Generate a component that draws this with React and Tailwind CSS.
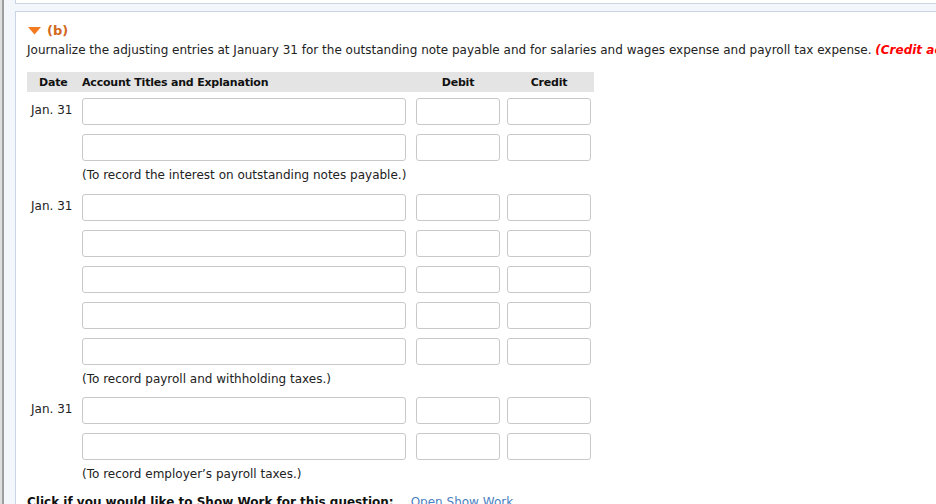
import React from "react";

const font = { fontFamily: '"DejaVu Sans", Verdana, sans-serif' };

function Inp({ w }) {
  return <div className={`${w} h-[27px] shrink-0 rounded-[3px] border border-[#c9c9c9] bg-white`} />;
}

function Row({ date }) {
  return (
    <div className="flex h-[27px] shrink-0 items-start">
      <div className="w-[55px] shrink-0 pl-[4px] pt-[5px] text-[12px] leading-[15px] text-[#222]">{date}</div>
      <Inp w="w-[324px]" />
      <div className="w-[10px] shrink-0" />
      <Inp w="w-[84px]" />
      <div className="w-[7px] shrink-0" />
      <Inp w="w-[84px]" />
    </div>
  );
}

function Group({ n, caption, mt }) {
  const rows = [];
  for (let i = 0; i < n; i++) rows.push(<Row key={i} date={i === 0 ? "Jan. 31" : ""} />);
  return (
    <div className={`${mt} flex shrink-0 flex-col`}>
      <div className="flex flex-col gap-[9px]">{rows}</div>
      <div className="mt-[7px] pl-[55px] text-[12px] leading-[15px] text-[#222]">{caption}</div>
    </div>
  );
}

export default function App() {
  return (
    <div className="flex h-[504px] w-[936px] overflow-hidden bg-[#f3f6fa]" style={font}>
      <div className="w-[2px] shrink-0 bg-[#dedede]" />
      <div className="w-[2px] shrink-0 bg-[#9d9d9d]" />
      <div className="flex min-w-0 flex-1 flex-col overflow-hidden pl-[11px]">
        <div className="h-[4px] shrink-0 border-b border-l border-[#c9d5e2] bg-white" />
        <div className="mt-[7px] flex min-h-0 flex-1 flex-col overflow-hidden border-l border-t border-[#c9d5e2] bg-white pl-[11px] pt-[12px]">
          <div className="flex h-[14px] shrink-0 items-center">
            <svg width="13" height="8" viewBox="0 0 13 8" className="ml-[1px] shrink-0">
              <polygon points="0,0 13,0 6.5,7.5" fill="#f47a20" />
            </svg>
            <span className="ml-[6px] text-[13px] font-bold leading-[14px] text-[#d2691e]">(b)</span>
          </div>
          <div className="mt-[5px] shrink-0 whitespace-nowrap text-[12px] leading-[15px] text-[#222]">
            Journalize the adjusting entries at January 31 for the outstanding note payable and for salaries and wages expense and payroll tax expense.{" "}
            <span className="font-bold italic text-[#ff0000]">(Credit account titles are automatically indented when amount is entered.)</span>
          </div>
          <div className="mt-[14px] flex h-[20px] w-[567px] shrink-0 items-center bg-[#e4e4e4] text-[11px] font-bold leading-[13px] tracking-[-0.2px] text-[#111]">
            <div className="w-[55px] shrink-0 pl-[12px]">Date</div>
            <div className="w-[334px] shrink-0">Account Titles and Explanation</div>
            <div className="w-[84px] shrink-0 text-center">Debit</div>
            <div className="w-[7px] shrink-0" />
            <div className="w-[84px] shrink-0 text-center">Credit</div>
          </div>
          <Group n={2} mt="mt-[6px]" caption="(To record the interest on outstanding notes payable.)" />
          <Group n={5} mt="mt-[11px]" caption="(To record payroll and withholding taxes.)" />
          <Group n={2} mt="mt-[10px]" caption="(To record employer’s payroll taxes.)" />
          <div className="mt-[13px] flex shrink-0 items-baseline whitespace-nowrap text-[12px] leading-[15px]">
            <span className="font-bold text-[#111]">Click if you would like to Show Work for this question:</span>
            <span className="ml-[17px] text-[12px] text-[#4a7fc1]">Open Show Work</span>
          </div>
        </div>
      </div>
    </div>
  );
}
